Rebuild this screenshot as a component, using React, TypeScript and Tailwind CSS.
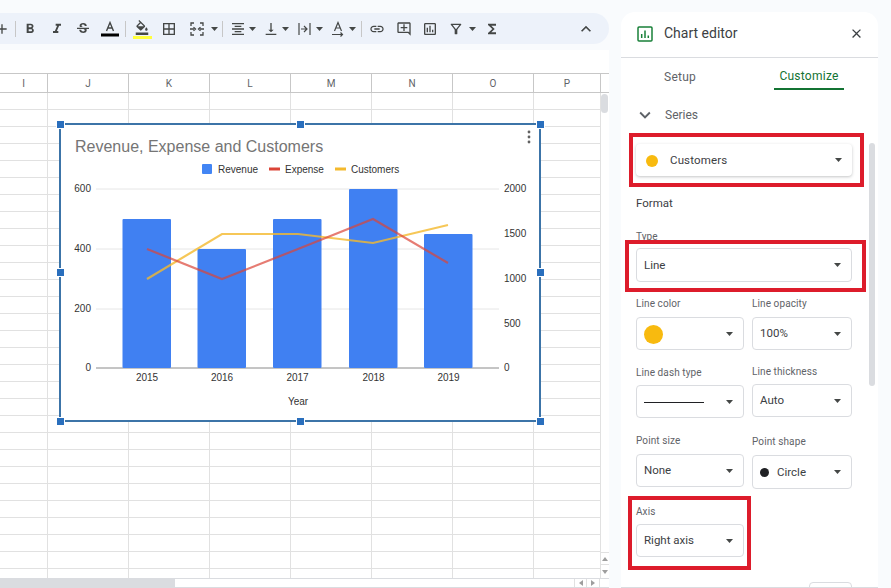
import type { ReactNode } from 'react';
import {
  MdAdd,
  MdBorderAll,
  MdClose,
  MdExpandLess,
  MdExpandMore,
  MdFormatAlignCenter,
  MdFormatBold,
  MdFormatColorFill,
  MdFormatItalic,
  MdFunctions,
  MdLink,
  MdOutlineAddComment,
  MdOutlineFilterAlt,
  MdOutlineInsertChart,
  MdStrikethroughS,
  MdVerticalAlignBottom,
} from 'react-icons/md';

const cols = ['I', 'J', 'K', 'L', 'M', 'N', 'O', 'P'];
const colWidths = ['w-[48px]', 'w-[81px]', 'w-[81px]', 'w-[81px]', 'w-[81px]', 'w-[81px]', 'w-[81px]', 'flex-1'];
const rows = Array.from({ length: 29 }, (_, i) => i);

const Caret = ({ className = '' }: { className?: string }) => (
  <svg viewBox="0 0 7 4" className={`h-[4px] w-[7px] shrink-0 fill-[#444746] ${className}`}>
    <polygon points="0,0 7,0 3.5,4" />
  </svg>
);

const Sep = ({ className = '' }: { className?: string }) => (
  <div className={`h-[16px] w-px shrink-0 bg-[#c7c7c7] ${className}`} />
);

const TextColorIcon = () => (
  <svg viewBox="0 0 18 18" className="h-[18px] w-[18px]">
    <path d="M5.5 11 9 2.5 12.5 11M6.7 8h4.6" fill="none" stroke="#444746" strokeWidth="1.4" />
    <rect x="0" y="13.5" width="18" height="3" fill="#000" />
  </svg>
);

const MergeIcon = () => (
  <svg viewBox="0 0 16 16" className="h-4 w-4" fill="none" stroke="#444746" strokeWidth="1.3">
    <path d="M5 2H2v3M11 2h3v3M2 11v3h3M14 11v3h-3M1 8h4M15 8h-4" />
    <path d="M4.5 6.2 6.5 8l-2 1.8M11.500 6.200 9.500 8l2 1.800" />
  </svg>
);

const WrapIcon = () => (
  <svg viewBox="0 0 16 16" className="h-4 w-4" fill="none" stroke="#444746" strokeWidth="1.2">
    <path d="M2 2v12M13 2v12M4 8h6M7 5l3 3-3 3" />
  </svg>
);

const RotateIcon = () => (
  <svg viewBox="0 0 16 16" className="h-4 w-4" fill="none" stroke="#444746" strokeWidth="1.2">
    <path d="M4.500 10 8 1.500 11.500 10M5.800 7h4.400M2 13.500h10M10.500 11.500l2 2-2 2" />
  </svg>
);

function Toolbar() {
  return (
    <div className="flex h-[31px] w-[609px] shrink-0 items-center overflow-hidden rounded-r-[16px] bg-[#edf2fa] text-[#444746]">
      <MdAdd className="ml-[-6px] h-4 w-4 shrink-0" />
      <Sep className="ml-[5px]" />
      <MdFormatBold className="ml-[6px] h-4 w-4 shrink-0" />
      <MdFormatItalic className="ml-[11px] h-4 w-4 shrink-0" />
      <MdStrikethroughS className="ml-[10px] h-4 w-4 shrink-0" />
      <div className="ml-[10px] shrink-0"><TextColorIcon /></div>
      <Sep className="ml-[6px]" />
      <div className="relative ml-[7px] h-[18px] w-[18px] shrink-0">
        <MdFormatColorFill className="h-[15px] w-[18px]" />
        <div className="absolute bottom-[-1px] left-0 h-[3px] w-[19px] bg-[#ffff3c]" />
      </div>
      <MdBorderAll className="ml-[10px] h-4 w-4 shrink-0" />
      <div className="ml-[12px] shrink-0"><MergeIcon /></div>
      <Caret className="ml-[6px]" />
      <Sep className="ml-[4px]" />
      <MdFormatAlignCenter className="ml-[7px] h-4 w-4 shrink-0" />
      <Caret className="ml-[3px]" />
      <MdVerticalAlignBottom className="ml-[7px] h-4 w-4 shrink-0" />
      <Caret className="ml-[3px]" />
      <div className="ml-[8px] shrink-0"><WrapIcon /></div>
      <Caret className="ml-[3px]" />
      <div className="ml-[7px] shrink-0"><RotateIcon /></div>
      <Caret className="ml-[3px]" />
      <Sep className="ml-[5px]" />
      <MdLink className="ml-[7px] h-4 w-4 shrink-0" />
      <MdOutlineAddComment className="ml-[11px] h-4 w-4 shrink-0" />
      <MdOutlineInsertChart className="ml-[10px] h-4 w-4 shrink-0" />
      <MdOutlineFilterAlt className="ml-[10px] h-4 w-4 shrink-0" />
      <Caret className="ml-[5px]" />
      <MdFunctions className="ml-[8px] h-4 w-4 shrink-0" />
      <MdExpandLess className="ml-auto mr-[13px] h-5 w-5 shrink-0" />
    </div>
  );
}

const handles = [
  'left-[-5px] top-[-5px]',
  'left-[235px] top-[-5px]',
  'left-[475px] top-[-5px]',
  'left-[-5px] top-[143px]',
  'left-[475px] top-[143px]',
  'left-[-5px] top-[292px]',
  'left-[235px] top-[292px]',
  'left-[475px] top-[292px]',
];

const bars = [
  { x: 122.5, top: 219, year: '2015' },
  { x: 197.5, top: 249, year: '2016' },
  { x: 273, top: 219, year: '2017' },
  { x: 349, top: 189, year: '2018' },
  { x: 424, top: 234, year: '2019' },
];

function Chart() {
  return (
    <div className="absolute left-[59px] top-[73px] h-[299px] w-[482px] border-2 border-[#3c74a8] bg-white">
      <svg viewBox="61 125 478 295" className="block h-[295px] w-[478px] font-['Liberation_Sans',sans-serif]">
        <text x="75" y="152" fontSize="16" fill="#757575">Revenue, Expense and Customers</text>
        <circle cx="529" cy="132" r="1.400" fill="#616161" />
        <circle cx="529" cy="137" r="1.400" fill="#616161" />
        <circle cx="529" cy="142" r="1.400" fill="#616161" />

        <rect x="202" y="164" width="10" height="10" rx="1" fill="#4285f4" />
        <text x="218" y="172.500" fontSize="10" fill="#333">Revenue</text>
        <rect x="269" y="167.500" width="11" height="3" fill="#db4437" />
        <text x="285" y="172.500" fontSize="10" fill="#333">Expense</text>
        <rect x="335" y="167.500" width="11" height="3" fill="#f4b92d" />
        <text x="351" y="172.500" fontSize="10" fill="#333">Customers</text>

        {[189, 249, 309].map((y) => (
          <line key={y} x1="96" x2="499" y1={y} y2={y} stroke="#e6e6e6" />
        ))}
        <line x1="96" x2="499" y1="368" y2="368" stroke="#8a8a8a" />

        {[['600', 192], ['400', 252], ['200', 312], ['0', 371]].map(([t, y]) => (
          <text key={t} x="91" y={y} fontSize="10" textAnchor="end" fill="#333">{t}</text>
        ))}
        {[['2000', 192], ['1500', 237], ['1000', 282], ['500', 327], ['0', 371]].map(([t, y]) => (
          <text key={t} x="504" y={y} fontSize="10" fill="#333">{t}</text>
        ))}

        {bars.map((b) => (
          <g key={b.year}>
            <rect x={b.x} y={b.top} width="48.500" height={368 - b.top} rx="1" fill="#4080f2" />
            <text x={b.x + 24.500} y="381" fontSize="10" textAnchor="middle" fill="#333">{b.year}</text>
          </g>
        ))}

        <polyline points="147,279 222,234 298,234 373,243 448,225" fill="none" stroke="#f4b92d" strokeOpacity="0.8" strokeWidth="2.200" />
        <polyline points="147,249 222,279 298,249 373,219 448,263" fill="none" stroke="#db4437" strokeOpacity="0.7" strokeWidth="2.200" />

        <text x="298" y="405" fontSize="10" textAnchor="middle" fill="#333">Year</text>
      </svg>
      {handles.map((h) => (
        <div key={h} className={`absolute h-[9px] w-[9px] border border-white bg-[#2a6fbd] ${h}`} />
      ))}
    </div>
  );
}

function Sheet() {
  return (
    <div className="relative mt-[6px] flex min-h-0 w-[609px] flex-1 flex-col bg-white">
      <div className="h-[23px] shrink-0" />
      <div className="flex min-h-0 flex-1">
        <div className="w-[601px] shrink-0 overflow-hidden">
          <div className="flex h-[20px] border-y border-[#c7c7c7]">
            {cols.map((c, i) => (
              <div
                key={c}
                className={`flex items-center justify-center border-r border-[#c7c7c7] text-[10px] text-[#5f6368] ${colWidths[i]}`}
              >
                {c}
              </div>
            ))}
          </div>
          {rows.map((r) => (
            <div key={r} className="flex h-[17px] border-b border-[#e1e1e1]">
              {cols.map((c, i) => (
                <div key={c} className={`border-r border-[#e1e1e1] ${colWidths[i]}`} />
              ))}
            </div>
          ))}
        </div>
        <div className="flex flex-1 flex-col">
          <div className="h-[20px] border-y border-[#c7c7c7]" />
          <div className="mt-[1px] h-[19px] w-[7px] rounded bg-[#dadce0]" />
          <div className="mt-auto flex h-[13px] items-center justify-center border-y border-[#e1e1e1]">
            <div className="h-0 w-0 border-x-[3px] border-b-[4px] border-x-transparent border-b-[#9e9e9e]" />
          </div>
          <div className="flex h-[13px] items-center justify-center">
            <div className="h-0 w-0 border-x-[3px] border-t-[4px] border-x-transparent border-t-[#9e9e9e]" />
          </div>
        </div>
      </div>
      <div className="flex h-[10px] shrink-0 items-stretch border-y border-[#dadce0]">
        <div className="w-[175px] bg-[#dadce0]" />
        <div className="ml-auto mr-[9px] flex">
          <div className="flex w-[13px] items-center justify-center border-x border-[#e1e1e1]">
            <div className="h-0 w-0 border-y-[3px] border-r-[4px] border-y-transparent border-r-[#9e9e9e]" />
          </div>
          <div className="flex w-[13px] items-center justify-center border-r border-[#e1e1e1]">
            <div className="h-0 w-0 border-y-[3px] border-l-[4px] border-y-transparent border-l-[#9e9e9e]" />
          </div>
        </div>
      </div>
      <Chart />
    </div>
  );
}

const Label = ({ children }: { children: ReactNode }) => (
  <div className="h-[12px] text-[10px] leading-[12px] tracking-[0.1px] text-[#5f6368]">{children}</div>
);

const Select = ({ children, className = '' }: { children?: ReactNode; className?: string }) => (
  <div
    className={`flex items-center justify-between rounded border border-[#dadce0] bg-white pl-[7px] pr-[10px] text-[11.500px] text-[#3c4043] ${className}`}
  >
    <div className="flex items-center pt-[1px]">{children}</div>
    <Caret className="fill-[#5f6368]" />
  </div>
);

const RedBox = ({ className }: { className: string }) => (
  <div className={`pointer-events-none absolute border-[4px] border-[#dd1c2b] ${className}`} />
);

function ChartEditor() {
  return (
    <aside className="relative ml-[9px] mt-[12px] flex h-[576px] w-[257px] shrink-0 flex-col overflow-hidden rounded-t-[14px] border-b border-[#dadce0] bg-white">
      <div className="flex h-[46px] shrink-0 items-center border-b border-[#dadce0] pb-[2px] pl-[16px] pr-[14px]">
        <svg viewBox="0 0 16 16" className="h-[16px] w-[16px]" fill="none">
          <rect x="1" y="1" width="14" height="14" rx="1" stroke="#188038" strokeWidth="1.500" />
          <path d="M4.700 8v4M8 4.500V12M11.300 9.500V12" stroke="#188038" strokeWidth="1.500" />
        </svg>
        <div className="ml-[11px] text-[14px] text-[#3c4043]">Chart editor</div>
        <MdClose className="ml-auto h-[15px] w-[15px] text-[#3c4043]" />
      </div>

      <div className="flex h-[32px] shrink-0 text-[12px] tracking-[0.25px]">
        <div className="ml-[43px] flex items-center pt-[5px] text-[#5f6368]">Setup</div>
        <div className="ml-[78px] flex w-[70px] items-center justify-center border-b-2 border-[#137333] pt-[5px] text-[#137333]">
          Customize
        </div>
      </div>

      <div className="flex flex-col pl-[15px] pr-[26px]">
        <div className="mt-[17px] flex h-[16px] items-center text-[12px] text-[#5f6368]">
          <MdExpandMore className="h-[22px] w-[22px] shrink-0 -translate-x-[2px] text-[#5f6368]" />
          <span className="ml-[7px]">Series</span>
        </div>

        <div className="relative mt-[21px]">
          <div className="flex h-[32px] items-center justify-between rounded bg-white pl-[10px] pr-[10px] text-[11.500px] tracking-[0.15px] text-[#3c4043] shadow-[0_1px_3px_rgba(60,64,67,0.3)]">
            <div className="flex items-center pt-[1px]">
              <div className="h-[12px] w-[12px] rounded-full bg-[#f8ba0f]" />
              <span className="ml-[12px]">Customers</span>
            </div>
            <Caret className="fill-[#5f6368]" />
          </div>
          <RedBox className="-left-[7px] -right-[12px] -bottom-[11px] -top-[11px]" />
        </div>

        <div className="mt-[20px] h-[14px] text-[11.500px] leading-[14px] text-[#3c4043]">Format</div>

        <div className="mt-[21px]"><Label>Type</Label></div>
        <div className="relative mt-[5px]">
          <Select className="h-[34px]">Line</Select>
          <RedBox className="-left-[11px] -right-[14px] -bottom-[10px] -top-[8px]" />
        </div>

        <div className="mt-[16px] flex gap-[8px]">
          <div className="w-[108px] shrink-0">
            <Label>Line color</Label>
            <Select className="mt-[7px] h-[33px]">
              <div className="h-[19px] w-[19px] rounded-full bg-[#f8ba0f]" />
            </Select>

            <div className="mt-[17px]"><Label>Line dash type</Label></div>
            <Select className="mt-[6px] h-[33px]">
              <div className="h-px w-[60px] bg-[#202124]" />
            </Select>

            <div className="mt-[17px]"><Label>Point size</Label></div>
            <Select className="mt-[7px] h-[33px]">None</Select>

            <div className="relative mt-[19px]">
              <Label>Axis</Label>
              <Select className="mt-[6px] h-[33px]">Right axis</Select>
              <RedBox className="-left-[8px] -right-[7px] -bottom-[13px] -top-[10px]" />
            </div>
          </div>

          <div className="w-[100px] shrink-0">
            <Label>Line opacity</Label>
            <Select className="mt-[7px] h-[33px]">100%</Select>

            <div className="mt-[16px]"><Label>Line thickness</Label></div>
            <Select className="mt-[6px] h-[33px]">Auto</Select>

            <div className="mt-[19px]"><Label>Point shape</Label></div>
            <Select className="mt-[7px] h-[34px]">
              <div className="h-[9px] w-[9px] rounded-full bg-[#202124]" />
              <span className="ml-[8px]">Circle</span>
            </Select>
          </div>
        </div>

        <div className="ml-auto mt-[25px] h-[20px] w-[43px] shrink-0 rounded-t border border-[#dadce0]" />
      </div>

      <div className="absolute left-[248px] top-[131px] h-[243px] w-[6px] rounded-[3px] bg-[#dadce0]" />
    </aside>
  );
}

export default function App() {
  return (
    <div className="flex h-[588px] w-[891px] overflow-hidden bg-[#f9fbfd] font-['Roboto',sans-serif]">
      <div className="flex h-full w-[612px] shrink-0 flex-col pt-[13px]">
        <Toolbar />
        <Sheet />
      </div>
      <ChartEditor />
    </div>
  );
}
